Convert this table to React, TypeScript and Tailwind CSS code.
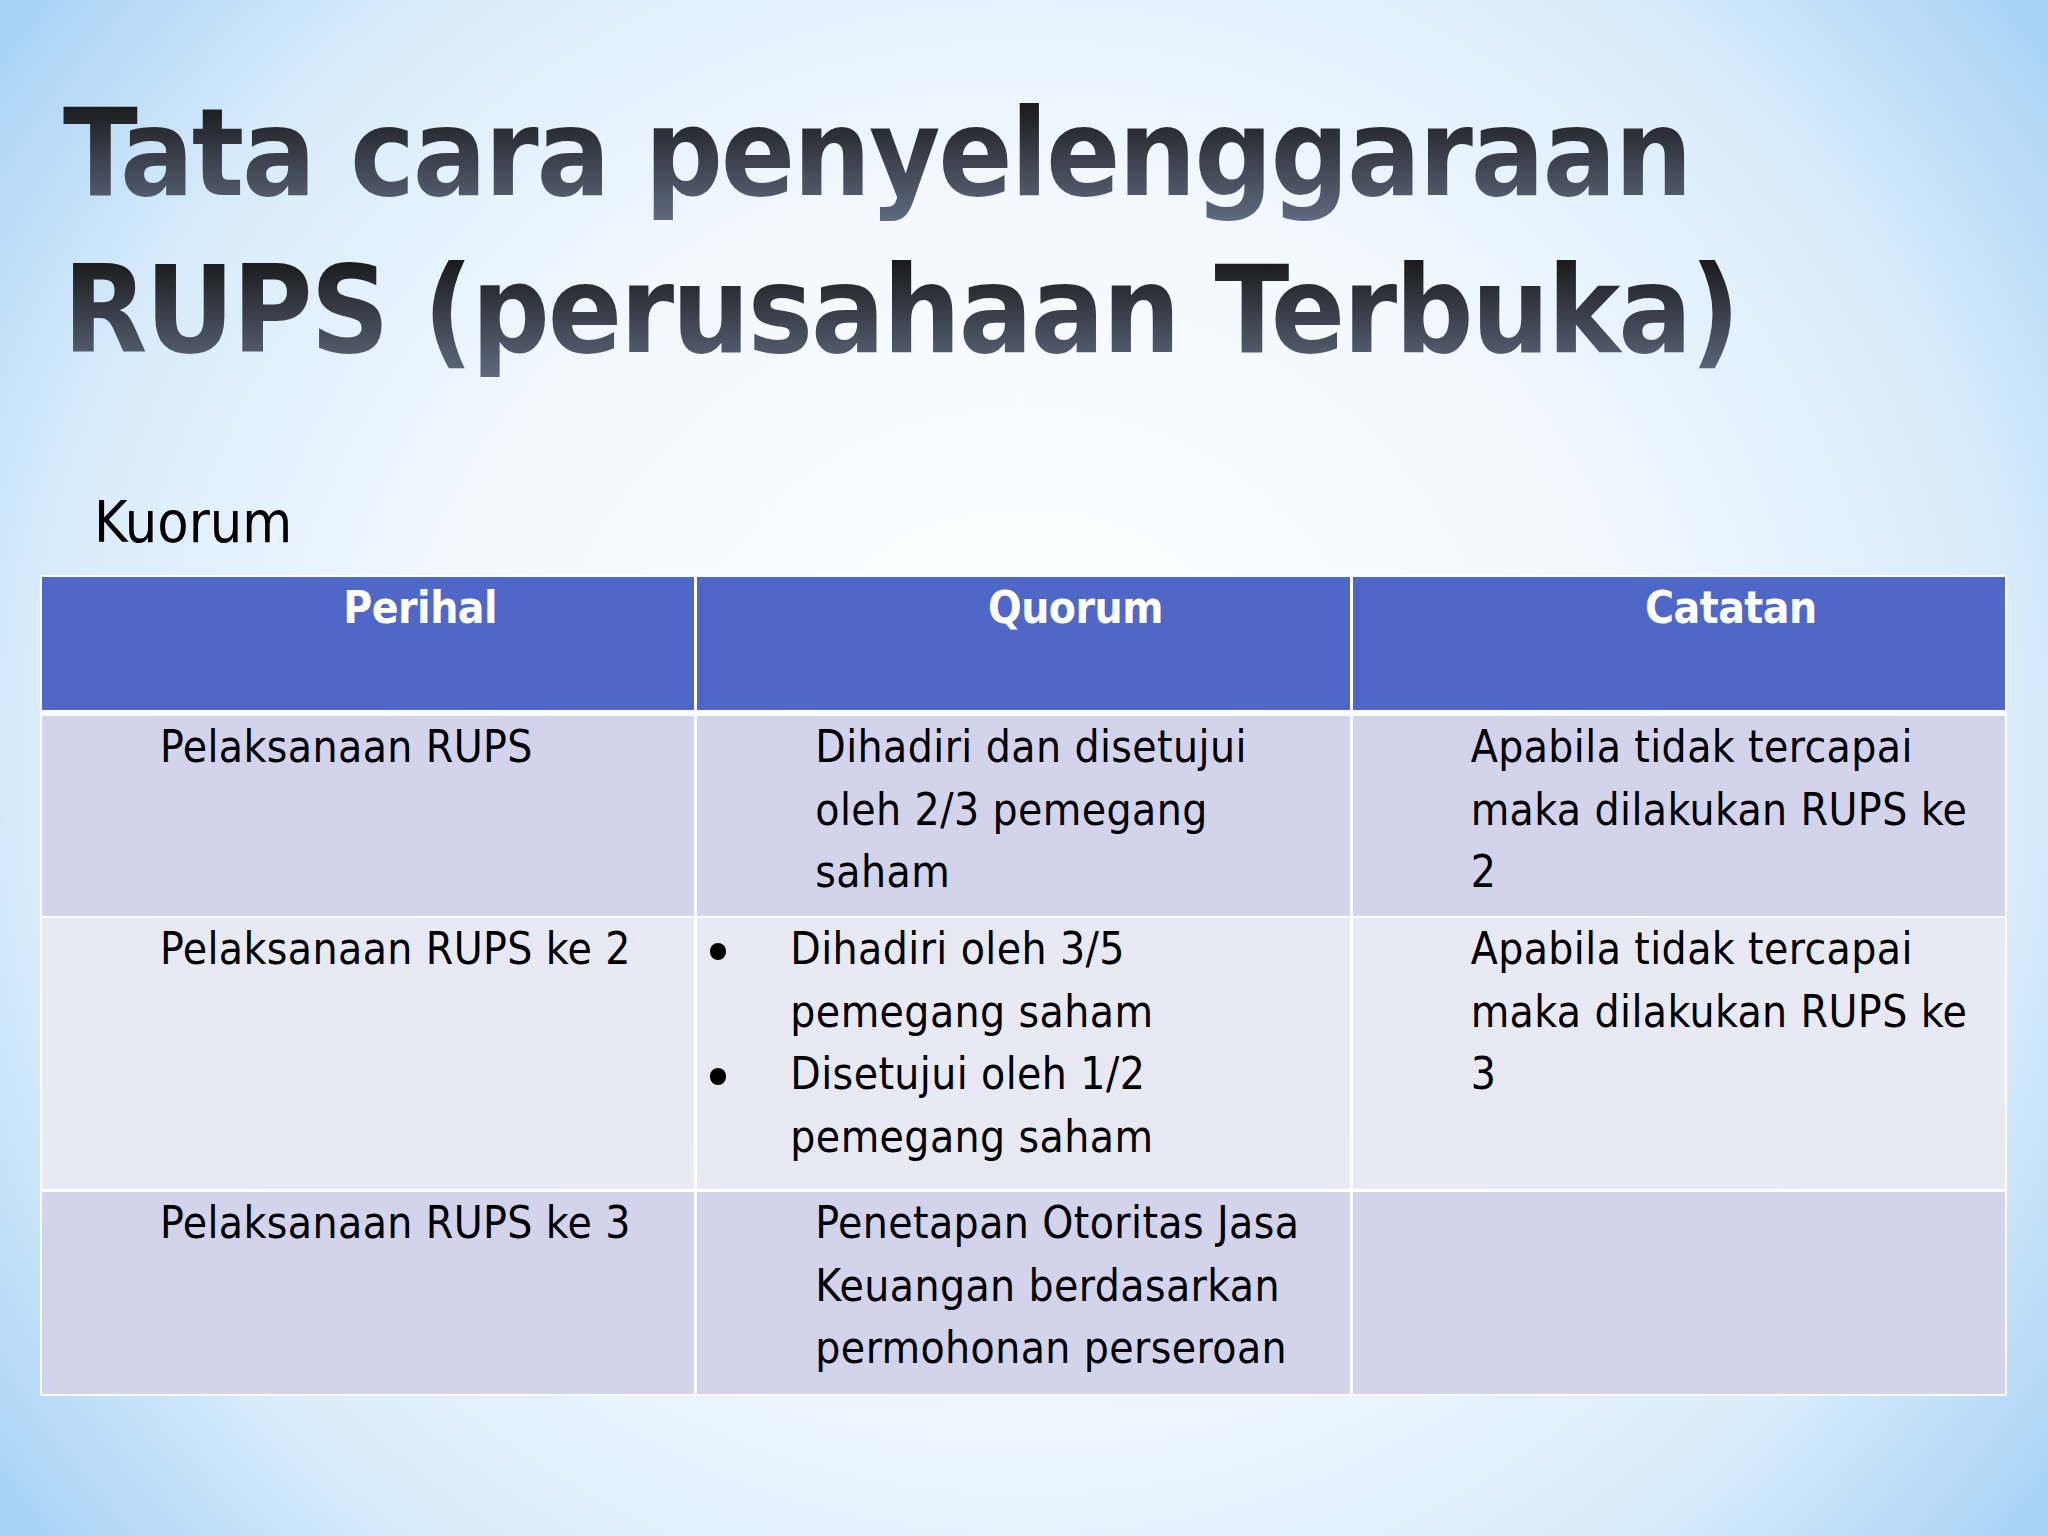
import React from 'react';

const FONT = "font-['DejaVu_Sans_Condensed','DejaVu_Sans',sans-serif]";

function Cell({ children, className = '' }: { children?: React.ReactNode; className?: string }) {
  return <div className={`text-[44px] leading-[62.5px] tracking-[0.4px] text-black ${className}`}>{children}</div>;
}

function Bullet() {
  return (
    <span className="w-[80px] shrink-0 flex items-center h-[62.5px]">
      <span className="block w-[16px] h-[17px] rounded-full bg-black mt-[4px]" />
    </span>
  );
}

export default function App() {
  return (
    <div
      className={`w-[2048px] h-[1536px] overflow-hidden ${FONT} bg-[radial-gradient(ellipse_62%_80%_at_50%_50%,#ffffff_0%,#f4f9fe_45%,#d9ecfb_78%,#a8d3f6_100%)]`}
    >
      {/* Title */}
      <div className="pt-[75px] pl-[63px]">
        <div className="text-[122px] leading-[157px] font-bold tracking-[-2.2px] whitespace-nowrap">
          <div className="w-fit bg-[linear-gradient(180deg,#1c1c1e_20%,#4b5363_70%,#667189_100%)] bg-clip-text text-transparent">
            Tata cara penyelenggaraan
          </div>
          <div className="w-fit bg-[linear-gradient(180deg,#1c1c1e_20%,#4b5363_70%,#667189_100%)] bg-clip-text text-transparent">
            RUPS (perusahaan Terbuka)
          </div>
        </div>
      </div>

      {/* Subheading */}
      <div className="mt-[100px] pl-[94px] text-[57px] leading-[66px] text-black">Kuorum</div>

      {/* Table */}
      <div className="mt-[20px] ml-[40px] w-[1967px] bg-white/90 p-[2px] flex flex-col">
        <div className="grid grid-cols-3 gap-x-[3px] h-[133px] bg-white">
          {['Perihal', 'Quorum', 'Catatan'].map((h) => (
            <div
              key={h}
              className="bg-[#4f67c7] pl-[118px] pr-[14px] text-center text-white font-bold text-[44px] leading-[62.5px] tracking-[-0.5px]"
            >
              {h}
            </div>
          ))}
        </div>

        <div className="mt-[6px] grid grid-cols-3 gap-x-[3px] h-[200px]">
          <Cell className="bg-[#d3d3ec] pl-[118px]">Pelaksanaan RUPS</Cell>
          <Cell className="bg-[#d3d3ec] pl-[118px]">
            Dihadiri dan disetujui
            <br />
            oleh 2/3 pemegang
            <br />
            saham
          </Cell>
          <Cell className="bg-[#d3d3ec] pl-[118px]">
            Apabila tidak tercapai
            <br />
            maka dilakukan RUPS ke
            <br />2
          </Cell>
        </div>

        <div className="mt-[2px] grid grid-cols-3 gap-x-[3px] h-[271px]">
          <Cell className="bg-[#e9e9f4] pl-[118px]">Pelaksanaan RUPS ke 2</Cell>
          <Cell className="bg-[#e9e9f4] pl-[13px]">
            <div className="flex">
              <Bullet />
              <span>
                Dihadiri oleh 3/5
                <br />
                pemegang saham
              </span>
            </div>
            <div className="flex">
              <Bullet />
              <span>
                Disetujui oleh 1/2
                <br />
                pemegang saham
              </span>
            </div>
          </Cell>
          <Cell className="bg-[#e9e9f4] pl-[118px]">
            Apabila tidak tercapai
            <br />
            maka dilakukan RUPS ke
            <br />3
          </Cell>
        </div>

        <div className="mt-[3px] grid grid-cols-3 gap-x-[3px] h-[202px]">
          <Cell className="bg-[#d3d3ec] pl-[118px]">Pelaksanaan RUPS ke 3</Cell>
          <Cell className="bg-[#d3d3ec] pl-[118px]">
            Penetapan Otoritas Jasa
            <br />
            Keuangan berdasarkan
            <br />
            permohonan perseroan
          </Cell>
          <Cell className="bg-[#d3d3ec]" />
        </div>
      </div>
    </div>
  );
}
